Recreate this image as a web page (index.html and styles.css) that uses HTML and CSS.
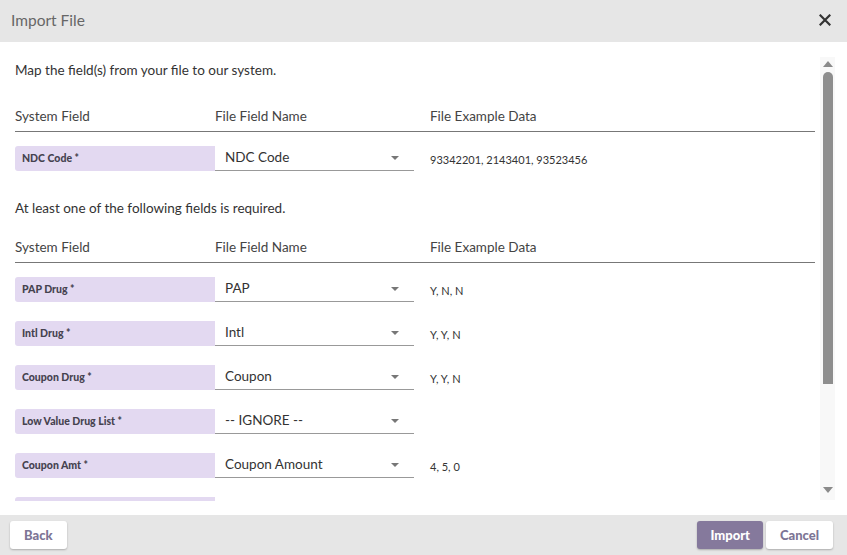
FILE: index.html
```html
<!DOCTYPE html>
<html lang="en">
<head>
<meta charset="UTF-8">
<meta name="viewport" content="width=device-width, initial-scale=1.0">
<title>Import File</title>
<link rel="stylesheet" href="styles.css">
</head>
<body>
<div class="dialog">
  <div class="dialog-header">
    <span class="dialog-title">Import File</span>
    <svg class="close" width="12" height="12" viewBox="0 0 12 12">
      <path d="M1.5 1.5 L10.5 10.5 M10.5 1.5 L1.5 10.5" stroke="#333" stroke-width="2.2" stroke-linecap="square"/>
    </svg>
  </div>

  <div class="dialog-body">
    <div class="scroll">
      <p class="intro">Map the field(s) from your file to our system.</p>

      <div class="map-head">
        <div class="col-sys">System Field</div>
        <div class="col-file">File Field Name</div>
        <div class="col-data">File Example Data</div>
      </div>
      <div class="map-row">
        <div class="sys-label">NDC Code *</div>
        <div class="select"><span>NDC Code</span><i class="caret"></i></div>
        <div class="example">93342201, 2143401, 93523456</div>
      </div>

      <p class="note">At least one of the following fields is required.</p>

      <div class="map-head">
        <div class="col-sys">System Field</div>
        <div class="col-file">File Field Name</div>
        <div class="col-data">File Example Data</div>
      </div>
      <div class="map-row">
        <div class="sys-label">PAP Drug *</div>
        <div class="select"><span>PAP</span><i class="caret"></i></div>
        <div class="example">Y, N, N</div>
      </div>
      <div class="map-row">
        <div class="sys-label">Intl Drug *</div>
        <div class="select"><span>Intl</span><i class="caret"></i></div>
        <div class="example">Y, Y, N</div>
      </div>
      <div class="map-row">
        <div class="sys-label">Coupon Drug *</div>
        <div class="select"><span>Coupon</span><i class="caret"></i></div>
        <div class="example">Y, Y, N</div>
      </div>
      <div class="map-row">
        <div class="sys-label">Low Value Drug List *</div>
        <div class="select"><span>-- IGNORE --</span><i class="caret"></i></div>
        <div class="example"></div>
      </div>
      <div class="map-row">
        <div class="sys-label">Coupon Amt *</div>
        <div class="select"><span>Coupon Amount</span><i class="caret"></i></div>
        <div class="example">4, 5, 0</div>
      </div>
      <div class="map-row">
        <div class="sys-label"></div>
      </div>
    </div>

    <div class="scrollbar">
      <i class="arrow-up"></i>
      <div class="thumb"></div>
      <i class="arrow-down"></i>
    </div>
  </div>

  <div class="dialog-footer">
    <button class="btn">Back</button>
    <div class="actions">
      <button class="btn btn-primary">Import</button>
      <button class="btn">Cancel</button>
    </div>
  </div>
</div>
</body>
</html>
```

FILE: styles.css
```css
* {
  box-sizing: border-box;
}

body {
  margin: 0;
  font-family: Lato, "Open Sans", sans-serif;
  color: #333;
  background-color: #fff;
}

.dialog {
  display: flex;
  flex-direction: column;
  height: 100vh;
}

.dialog-header {
  height: 42px;
  flex: none;
  display: flex;
  justify-content: space-between;
  align-items: center;
  padding: 0 16px 2px 11px;
  background-color: #e6e6e6;
}

.dialog-title {
  font-size: 15.5px;
  color: #666;
}

.dialog-body {
  flex: 1;
  min-height: 0;
  display: flex;
  padding-bottom: 14px;
}

.scroll {
  flex: 1;
  overflow: hidden;
  padding: 0 2px 0 15px;
}

.intro,
.note {
  margin: 0;
  font-size: 13.5px;
  line-height: 20px;
  color: #333;
}

.intro {
  margin-top: 18px;
}

.note {
  margin-top: 27px;
}

.map-head {
  display: flex;
  font-size: 13.5px;
  line-height: 20px;
  color: #444;
  padding-bottom: 5px;
  border-bottom: 1px solid #777;
  margin-top: 26px;
}

.note + .map-head {
  margin-top: 19px;
}

.col-sys {
  width: 200px;
}

.col-file {
  width: 215px;
}

.map-row {
  display: flex;
  align-items: center;
  height: 25px;
  margin-top: 14px;
}

.map-row + .map-row {
  margin-top: 19px;
}

.sys-label {
  width: 200px;
  height: 25px;
  line-height: 25px;
  padding-left: 7px;
  font-size: 10.5px;
  font-weight: 900;
  color: #45424f;
  background-color: #e3d9f1;
  border-radius: 3px 0 0 3px;
  white-space: nowrap;
}

.select {
  width: 199px;
  height: 25px;
  display: flex;
  justify-content: space-between;
  align-items: center;
  padding: 0 15px 3px 10px;
  font-size: 13.5px;
  color: #333;
  border-bottom: 1px solid #999;
}

.caret {
  width: 0;
  height: 0;
  border-left: 4px solid transparent;
  border-right: 4px solid transparent;
  border-top: 4px solid #777;
  margin-top: 3px;
}

.example {
  margin-left: 16px;
  padding-top: 1px;
  font-size: 11px;
  color: #333;
}

.scrollbar {
  width: 15px;
  flex: none;
  margin: 15px 12px 1px 3px;
  background-color: #f8f8f8;
  display: flex;
  flex-direction: column;
  align-items: center;
  padding: 4px 0;
}

.arrow-up,
.arrow-down {
  width: 0;
  height: 0;
  border-left: 5px solid transparent;
  border-right: 5px solid transparent;
}

.arrow-up {
  border-bottom: 6px solid #8a8a8a;
}

.arrow-down {
  border-top: 6px solid #8a8a8a;
  margin-top: auto;
  margin-bottom: 3px;
}

.thumb {
  width: 10px;
  height: 312px;
  margin-top: 5px;
  background-color: #8e8e8e;
  border-radius: 5px 5px 0 0;
}

.dialog-footer {
  height: 40px;
  flex: none;
  display: flex;
  justify-content: space-between;
  align-items: center;
  padding: 0 14px 0 10px;
  background-color: #e6e6e6;
}

.actions {
  display: flex;
  gap: 3px;
}

.btn {
  height: 28px;
  padding: 0 14px;
  font-family: inherit;
  font-size: 13px;
  font-weight: 900;
  color: #7d7595;
  background-color: #fff;
  border: none;
  border-radius: 3px;
  box-shadow: 0 1px 2px rgba(0, 0, 0, 0.25);
  cursor: pointer;
}

.btn-primary {
  padding: 0 13px;
  color: #fff;
  background-color: #85799c;
}
```
